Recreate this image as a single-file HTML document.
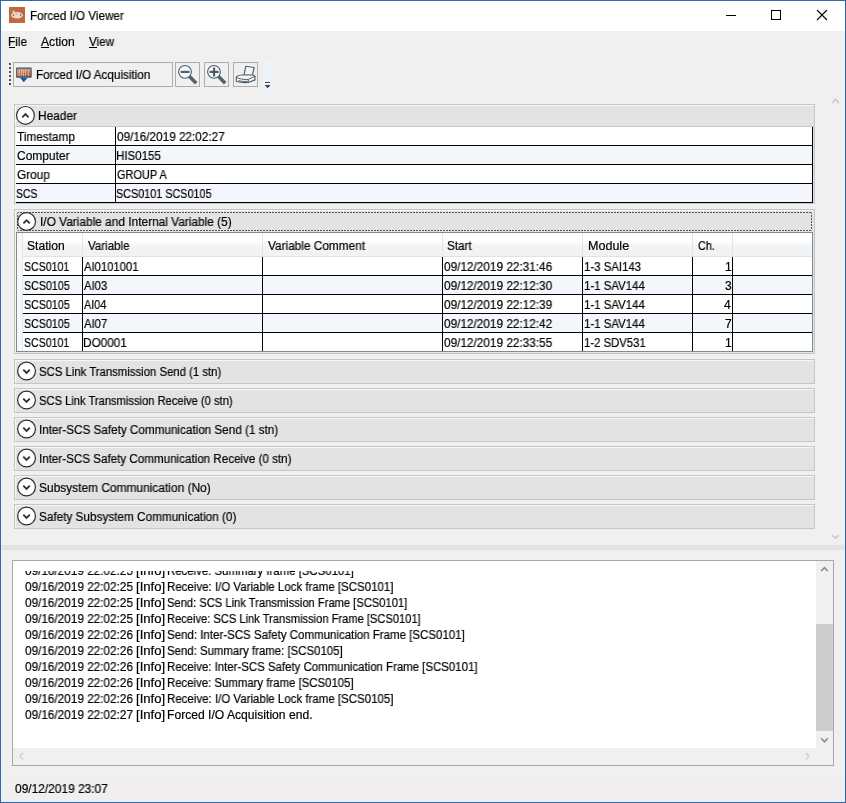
<!DOCTYPE html>
<html><head><meta charset="utf-8">
<style>
html,body{margin:0;padding:0;}
body{width:846px;height:803px;position:relative;overflow:hidden;background:#f0f0f0;font-family:"Liberation Sans",sans-serif;}
.a{position:absolute;box-sizing:border-box;}
.t{position:absolute;font-family:"Liberation Sans",sans-serif;font-size:12px;line-height:20px;white-space:pre;transform-origin:0 0;color:#000;will-change:transform;-webkit-text-stroke:0.2px currentColor;}
.pnl{position:absolute;left:14px;width:801px;border:1px solid #c6c6c6;background:#e3e3e3;box-shadow:inset 1px 1px 0 #f6f6f6;box-sizing:border-box;}
.hl{position:absolute;height:1px;background:#000;}
.vl{position:absolute;width:1px;background:#000;}
</style></head><body>
<!-- title bar -->
<div class="a" style="left:0;top:0;width:846px;height:31px;background:#fff"></div>
<svg class="a" style="left:9px;top:7px" width="16" height="16" viewBox="0 0 16 16">
<rect width="16" height="16" fill="#c0693f"/>
<path d="M1.8 8.3 C2.8 5.8 5.6 5 8.2 5.1 C10.6 5.2 13 6.2 14.2 8.2 C13 10.6 10.4 11.6 8 11.6 C5.4 11.6 2.8 10.6 1.8 8.3 Z" fill="#efd6cc"/>
<path d="M3.6 6.2 L3.8 3 L6.6 5.2 Z" fill="#efd6cc"/>
<circle cx="4.4" cy="8.2" r="0.75" fill="#6d4536"/><circle cx="11.6" cy="8.1" r="0.75" fill="#6d4536"/><circle cx="7.2" cy="6.9" r="0.6" fill="#9a7466"/>
</svg>
<!-- caption buttons -->
<div class="a" style="left:726px;top:15px;width:10px;height:1px;background:#000"></div>
<div class="a" style="left:771px;top:10px;width:10px;height:10px;border:1px solid #000"></div>
<svg class="a" style="left:816px;top:9px" width="12" height="12" viewBox="0 0 12 12"><path d="M1 1 L11 11 M11 1 L1 11" stroke="#000" stroke-width="1.1"/></svg>
<!-- menu underlines -->
<div class="a" style="left:9px;top:47px;width:6px;height:1px;background:#000"></div>
<div class="a" style="left:41px;top:47px;width:8px;height:1px;background:#000"></div>
<div class="a" style="left:89px;top:47px;width:8px;height:1px;background:#000"></div>
<!-- toolbar -->
<div class="a" style="left:9px;top:63px;width:2px;height:22px;background:repeating-linear-gradient(#505050 0 2px,transparent 2px 4px)"></div>
<div class="a" style="left:13px;top:62px;width:160px;height:25px;border:1px solid #adadad;background:#f0f0f0"></div>
<svg class="a" style="left:16px;top:67px" width="16" height="16" viewBox="0 0 16 16">
<defs><linearGradient id="og" x1="0" y1="0" x2="0" y2="1"><stop offset="0" stop-color="#d68d6c"/><stop offset="1" stop-color="#a9573a"/></linearGradient></defs>
<rect x="0.1" y="0.4" width="15.6" height="10.4" fill="#4a525b" rx="0.8"/>
<rect x="1.2" y="1.8" width="13.6" height="0.9" fill="#c9c9c9"/>
<rect x="1.4" y="3" width="13.2" height="6.2" fill="url(#og)"/>
<path d="M1.8 3v6.2M3.4 3v6.2M5.5 3v6.2M7.5 3v6.2M9.4 3v6.2M12.3 3v6.2" stroke="#efc8b4" stroke-width="0.9" opacity="0.8"/>
<path d="M4 10.8 L11.6 10.8 L7.8 15.2 Z" fill="#1b56a8"/>
</svg>
<div class="a" style="left:175px;top:62px;width:25px;height:25px;border:1px solid #adadad"></div>
<div class="a" style="left:204px;top:62px;width:25px;height:25px;border:1px solid #adadad"></div>
<div class="a" style="left:233px;top:62px;width:25px;height:25px;border:1px solid #adadad"></div>
<svg class="a" style="left:175px;top:62px" width="25" height="25" viewBox="0 0 25 25">
<circle cx="10" cy="9.8" r="6.4" fill="#f5f8fa" stroke="#4c5a66" stroke-width="1.05"/>
<path d="M5.6 9.9 H14.6" stroke="#4c5a66" stroke-width="2.1"/>
<path d="M14.3 14.3 L21.2 21.2" stroke="#4e6575" stroke-width="3.6" stroke-linecap="butt"/>
</svg>
<svg class="a" style="left:204px;top:62px" width="25" height="25" viewBox="0 0 25 25">
<circle cx="10" cy="9.8" r="6.4" fill="#f5f8fa" stroke="#4c5a66" stroke-width="1.05"/>
<path d="M5.6 9.9 H14.6 M10.1 5.4 V14.4" stroke="#4c5a66" stroke-width="2.1"/>
<path d="M14.3 14.3 L21.2 21.2" stroke="#4e6575" stroke-width="3.6" stroke-linecap="butt"/>
</svg>
<svg class="a" style="left:233px;top:62px" width="25" height="25" viewBox="0 0 25 25">
<path d="M11.2 12.2 L12.8 4.3 L21.2 5.5 L19.4 12.8" fill="#f4f7fa" stroke="#525f6a" stroke-width="1.15" stroke-linejoin="round"/>
<path d="M3.3 15 C4 13.6 7 13 10.5 12.7 L19.8 13 L22 14.2 L22 17.9 L15.2 20.5 C10 20.8 6 20.4 3.3 19.3 Z" fill="#f4f7fa" stroke="#525f6a" stroke-width="1.15" stroke-linejoin="round"/>
<path d="M3.5 15.2 C6 17.2 11 17.6 15.4 17.4 L22 14.2 M15.4 17.4 L15.2 20.4 M5.5 18.4 C8 19.4 11 19.6 14.6 19.4" fill="none" stroke="#525f6a" stroke-width="1"/>
</svg>
<div class="a" style="left:263px;top:59px;width:10px;height:32px;background:#eef3fa"></div>
<div class="a" style="left:265px;top:82px;width:5px;height:1px;background:#3d4750"></div>
<svg class="a" style="left:264px;top:85px" width="8" height="5" viewBox="0 0 8 5"><path d="M0.6 0 H6.6 L3.6 3.2 Z" fill="#3d4750"/></svg>

<!-- header panel -->
<div class="pnl" style="top:104px;height:100px;"></div>
<div class="a" style="left:15px;top:126px;width:799px;height:1px;background:#c6c6c6"></div>
<div class="a" style="left:16px;top:127px;width:797px;height:76px;background:#fff"></div>
<div class="a" style="left:16px;top:146px;width:796px;height:18px;background:#f3f6fb"></div>
<div class="a" style="left:16px;top:184px;width:796px;height:18px;background:#f3f6fb"></div>
<div class="hl" style="left:16px;top:145px;width:797px"></div>
<div class="hl" style="left:16px;top:164px;width:797px"></div>
<div class="hl" style="left:16px;top:183px;width:797px"></div>
<div class="hl" style="left:16px;top:202px;width:797px"></div>
<div class="vl" style="left:115px;top:127px;height:76px"></div>
<div class="vl" style="left:812px;top:127px;height:76px"></div>

<!-- panel 2 -->
<div class="pnl" style="top:209px;height:145px;"></div>
<div class="a" style="left:17px;top:212px;width:795px;height:19px;border-radius:2px;
 background:
 repeating-linear-gradient(90deg,#555 0 2px,transparent 2px 3px) top/100% 1px no-repeat,
 repeating-linear-gradient(90deg,#555 0 2px,transparent 2px 3px) bottom/100% 1px no-repeat,
 repeating-linear-gradient(180deg,#555 0 2px,transparent 2px 3px) left/1px 100% no-repeat,
 repeating-linear-gradient(180deg,#555 0 2px,transparent 2px 3px) right/1px 100% no-repeat;"></div>
<!-- grid -->
<div class="a" style="left:16px;top:232px;width:797px;height:120px;border:1px solid #7c8b98;background:#fff"></div>
<div class="a" style="left:17px;top:233px;width:795px;height:23px;background:linear-gradient(#fff 0,#fefefe 36%,#f2f3f5 58%,#f1f2f4 100%)"></div>
<div class="a" style="left:17px;top:256px;width:795px;height:1px;background:#e2e2e2"></div>
<div class="a" style="left:17px;top:233px;width:6px;height:118px;background:#f7f7f7"></div>
<div class="a" style="left:22px;top:233px;width:1px;height:118px;background:#e6e6e6"></div>
<div class="a" style="left:82px;top:233px;width:1px;height:23px;background:#e4e4e4"></div>
<div class="a" style="left:262px;top:233px;width:1px;height:23px;background:#e4e4e4"></div>
<div class="a" style="left:442px;top:233px;width:1px;height:23px;background:#e4e4e4"></div>
<div class="a" style="left:582px;top:233px;width:1px;height:23px;background:#e4e4e4"></div>
<div class="a" style="left:692px;top:233px;width:1px;height:23px;background:#e4e4e4"></div>
<div class="a" style="left:732px;top:233px;width:1px;height:23px;background:#e4e4e4"></div>
<div class="a" style="left:23px;top:276px;width:789px;height:18px;background:#f3f6fb"></div>
<div class="a" style="left:23px;top:314px;width:789px;height:18px;background:#f3f6fb"></div>
<div class="hl" style="left:23px;top:275px;width:789px"></div>
<div class="hl" style="left:23px;top:294px;width:789px"></div>
<div class="hl" style="left:23px;top:313px;width:789px"></div>
<div class="hl" style="left:23px;top:332px;width:789px"></div>
<div class="vl" style="left:82px;top:257px;height:94px"></div>
<div class="vl" style="left:262px;top:257px;height:94px"></div>
<div class="vl" style="left:442px;top:257px;height:94px"></div>
<div class="vl" style="left:582px;top:257px;height:94px"></div>
<div class="vl" style="left:692px;top:257px;height:94px"></div>
<div class="vl" style="left:732px;top:257px;height:94px"></div>

<!-- collapsed panels -->
<div class="pnl" style="top:359px;height:25px;"></div>
<div class="pnl" style="top:388px;height:25px;"></div>
<div class="pnl" style="top:417px;height:25px;"></div>
<div class="pnl" style="top:446px;height:25px;"></div>
<div class="pnl" style="top:475px;height:25px;"></div>
<div class="pnl" style="top:504px;height:25px;"></div>

<!-- expander circles -->
<svg class="a" style="left:0;top:0" width="846" height="540">
<g fill="#fff" stroke="#2e2e2e" stroke-width="1.2">
<circle cx="25.45" cy="115.4" r="8.9"/>
<circle cx="26.6" cy="221.5" r="8.9"/>
<circle cx="26.55" cy="371.05" r="8.9"/>
<circle cx="26.55" cy="400.05" r="8.9"/>
<circle cx="26.55" cy="429.05" r="8.9"/>
<circle cx="26.55" cy="458.05" r="8.9"/>
<circle cx="26.55" cy="487.05" r="8.9"/>
<circle cx="26.55" cy="516.05" r="8.9"/>
</g>
<g fill="none" stroke="#2e2e2e" stroke-width="1.8">
<path d="M22.3 117.3 L25.45 114.1 L28.6 117.3"/>
<path d="M23.4 223.4 L26.6 220.2 L29.8 223.4"/>
<path d="M23.3 369.6 L26.55 372.9 L29.8 369.6"/>
<path d="M23.3 398.6 L26.55 401.9 L29.8 398.6"/>
<path d="M23.3 427.6 L26.55 430.9 L29.8 427.6"/>
<path d="M23.3 456.6 L26.55 459.9 L29.8 456.6"/>
<path d="M23.3 485.6 L26.55 488.9 L29.8 485.6"/>
<path d="M23.3 514.6 L26.55 517.9 L29.8 514.6"/>
</g>
<g fill="none" stroke="#c6c6c6" stroke-width="1.5">
<path d="M832.3 102.9 L835.5 99.2 L838.7 102.9"/>
<path d="M832.3 535.2 L835.4 538.2 L838.5 535.2"/>
</g>
</svg>

<!-- splitter -->
<div class="a" style="left:1px;top:545px;width:844px;height:5px;background:#e3e3e3"></div>

<!-- log box -->
<div class="a" style="left:12px;top:560px;width:822px;height:206px;border:1px solid #a8a8a8;background:#fff"></div>
<div class="a" style="left:816px;top:561px;width:17px;height:204px;background:#f0f0f0"></div>
<div class="a" style="left:13px;top:748px;width:803px;height:17px;background:#f0f0f0"></div>
<div class="a" style="left:816px;top:624px;width:17px;height:107px;background:#cdcdcd"></div>
<svg class="a" style="left:0;top:540px" width="846" height="230" viewBox="0 540 846 230">
<g fill="none" stroke="#8a8a8a" stroke-width="1.6">
<path d="M821.2 571 L824.5 567.6 L827.8 571"/>
<path d="M821.2 738.3 L824.5 741.8 L827.8 738.3"/>
</g>
<g fill="none" stroke="#d0d0d0" stroke-width="1.4">
<path d="M23.2 753 L19.8 756.2 L23.2 759.5"/>
<path d="M805.8 753 L809.2 756.2 L805.8 759.5"/>
</g>
</svg>
<div style="position:absolute;left:0;top:0;width:846px;height:803px;clip-path:inset(571px 30px 56px 13px)">
<div class="t" style="left:24.90px;top:561px;transform:scaleX(0.9800);color:#000">09/16/2019 22:02:25</div>
<div class="t" style="left:135.81px;top:561px;transform:scaleX(1.0920);color:#000">[Info]</div>
<div class="t" style="left:167.45px;top:561px;transform:scaleX(0.9492);color:#000">Receive: Summary frame [SCS0101]</div>
<div class="t" style="left:24.90px;top:577px;transform:scaleX(0.9800);color:#000">09/16/2019 22:02:25</div>
<div class="t" style="left:135.81px;top:577px;transform:scaleX(1.0920);color:#000">[Info]</div>
<div class="t" style="left:167.44px;top:577px;transform:scaleX(0.9574);color:#000">Receive: I/O Variable Lock frame [SCS0101]</div>
<div class="t" style="left:24.90px;top:593px;transform:scaleX(0.9800);color:#000">09/16/2019 22:02:25</div>
<div class="t" style="left:135.81px;top:593px;transform:scaleX(1.0920);color:#000">[Info]</div>
<div class="t" style="left:167.47px;top:593px;transform:scaleX(0.9307);color:#000">Send: SCS Link Transmission Frame [SCS0101]</div>
<div class="t" style="left:24.90px;top:609px;transform:scaleX(0.9800);color:#000">09/16/2019 22:02:25</div>
<div class="t" style="left:135.81px;top:609px;transform:scaleX(1.0920);color:#000">[Info]</div>
<div class="t" style="left:167.47px;top:609px;transform:scaleX(0.9276);color:#000">Receive: SCS Link Transmission Frame [SCS0101]</div>
<div class="t" style="left:24.90px;top:625px;transform:scaleX(0.9800);color:#000">09/16/2019 22:02:26</div>
<div class="t" style="left:135.81px;top:625px;transform:scaleX(1.0920);color:#000">[Info]</div>
<div class="t" style="left:167.44px;top:625px;transform:scaleX(0.9583);color:#000">Send: Inter-SCS Safety Communication Frame [SCS0101]</div>
<div class="t" style="left:24.90px;top:641px;transform:scaleX(0.9800);color:#000">09/16/2019 22:02:26</div>
<div class="t" style="left:135.81px;top:641px;transform:scaleX(1.0920);color:#000">[Info]</div>
<div class="t" style="left:167.45px;top:641px;transform:scaleX(0.9508);color:#000">Send: Summary frame: [SCS0105]</div>
<div class="t" style="left:24.90px;top:657px;transform:scaleX(0.9800);color:#000">09/16/2019 22:02:26</div>
<div class="t" style="left:135.81px;top:657px;transform:scaleX(1.0920);color:#000">[Info]</div>
<div class="t" style="left:167.45px;top:657px;transform:scaleX(0.9520);color:#000">Receive: Inter-SCS Safety Communication Frame [SCS0101]</div>
<div class="t" style="left:24.90px;top:673px;transform:scaleX(0.9800);color:#000">09/16/2019 22:02:26</div>
<div class="t" style="left:135.81px;top:673px;transform:scaleX(1.0920);color:#000">[Info]</div>
<div class="t" style="left:167.45px;top:673px;transform:scaleX(0.9482);color:#000">Receive: Summary frame [SCS0105]</div>
<div class="t" style="left:24.90px;top:689px;transform:scaleX(0.9800);color:#000">09/16/2019 22:02:26</div>
<div class="t" style="left:135.81px;top:689px;transform:scaleX(1.0920);color:#000">[Info]</div>
<div class="t" style="left:167.44px;top:689px;transform:scaleX(0.9574);color:#000">Receive: I/O Variable Lock frame [SCS0105]</div>
<div class="t" style="left:24.90px;top:705px;transform:scaleX(0.9800);color:#000">09/16/2019 22:02:27</div>
<div class="t" style="left:135.81px;top:705px;transform:scaleX(1.0920);color:#000">[Info]</div>
<div class="t" style="left:167.39px;top:705px;transform:scaleX(1.0099);color:#000">Forced I/O Acquisition end.</div>
</div>

<!-- status bar -->
<div class="a" style="left:1px;top:775px;width:844px;height:27px;background:#f0eeee"></div>

<div class="t" style="left:29.53px;top:6px;transform:scaleX(0.9719);color:#000">Forced I/O Viewer</div>
<div class="t" style="left:8.22px;top:32px;transform:scaleX(0.9833);color:#000">File</div>
<div class="t" style="left:41.20px;top:32px;transform:scaleX(1.0091);color:#000">Action</div>
<div class="t" style="left:88.80px;top:32px;transform:scaleX(0.9692);color:#000">View</div>
<div class="t" style="left:35.73px;top:65px;transform:scaleX(0.9741);color:#000">Forced I/O Acquisition</div>
<div class="t" style="left:38.41px;top:106px;transform:scaleX(0.9895);color:#000">Header</div>
<div class="t" style="left:17.10px;top:127px;transform:scaleX(0.9831);color:#000">Timestamp</div>
<div class="t" style="left:117.20px;top:127px;transform:scaleX(0.9773);color:#000">09/16/2019 22:02:27</div>
<div class="t" style="left:17.10px;top:146px;transform:scaleX(0.9962);color:#000">Computer</div>
<div class="t" style="left:116.24px;top:146px;transform:scaleX(0.9600);color:#000">HIS0155</div>
<div class="t" style="left:17.10px;top:165px;transform:scaleX(0.9848);color:#000">Group</div>
<div class="t" style="left:117.20px;top:165px;transform:scaleX(0.9127);color:#000">GROUP A</div>
<div class="t" style="left:16.24px;top:184px;transform:scaleX(0.8609);color:#000">SCS</div>
<div class="t" style="left:116.30px;top:184px;transform:scaleX(0.9000);color:#000">SCS0101 SCS0105</div>
<div class="t" style="left:40.01px;top:212px;transform:scaleX(0.9896);color:#000">I/O Variable and Internal Variable (5)</div>
<div class="t" style="left:27.19px;top:236px;transform:scaleX(1.0083);color:#000">Station</div>
<div class="t" style="left:88.30px;top:236px;transform:scaleX(0.9628);color:#000">Variable</div>
<div class="t" style="left:268.00px;top:236px;transform:scaleX(0.9848);color:#000">Variable Comment</div>
<div class="t" style="left:446.82px;top:236px;transform:scaleX(0.9760);color:#000">Start</div>
<div class="t" style="left:587.56px;top:236px;transform:scaleX(1.0447);color:#000">Module</div>
<div class="t" style="left:698.40px;top:236px;transform:scaleX(0.9000);color:#000">Ch.</div>
<div class="t" style="left:23.92px;top:257px;transform:scaleX(0.8800);color:#000">SCS0101</div>
<div class="t" style="left:84.40px;top:257px;transform:scaleX(0.9379);color:#000">AI0101001</div>
<div class="t" style="left:443.90px;top:257px;transform:scaleX(0.9827);color:#000">09/12/2019 22:31:46</div>
<div class="t" style="left:584.05px;top:257px;transform:scaleX(0.9508);color:#000">1-3 SAI143</div>
<div class="t" style="left:724.50px;top:257px;transform:scaleX(1.0000);color:#000">1</div>
<div class="t" style="left:23.91px;top:276px;transform:scaleX(0.8900);color:#000">SCS0105</div>
<div class="t" style="left:84.40px;top:276px;transform:scaleX(0.9417);color:#000">AI03</div>
<div class="t" style="left:443.90px;top:276px;transform:scaleX(0.9827);color:#000">09/12/2019 22:12:30</div>
<div class="t" style="left:584.05px;top:276px;transform:scaleX(0.9524);color:#000">1-1 SAV144</div>
<div class="t" style="left:724.50px;top:276px;transform:scaleX(1.0000);color:#000">3</div>
<div class="t" style="left:23.91px;top:295px;transform:scaleX(0.8900);color:#000">SCS0105</div>
<div class="t" style="left:84.40px;top:295px;transform:scaleX(0.9040);color:#000">AI04</div>
<div class="t" style="left:443.90px;top:295px;transform:scaleX(0.9827);color:#000">09/12/2019 22:12:39</div>
<div class="t" style="left:584.05px;top:295px;transform:scaleX(0.9524);color:#000">1-1 SAV144</div>
<div class="t" style="left:723.50px;top:295px;transform:scaleX(1.0000);color:#000">4</div>
<div class="t" style="left:23.91px;top:314px;transform:scaleX(0.8900);color:#000">SCS0105</div>
<div class="t" style="left:84.40px;top:314px;transform:scaleX(0.9417);color:#000">AI07</div>
<div class="t" style="left:443.90px;top:314px;transform:scaleX(0.9827);color:#000">09/12/2019 22:12:42</div>
<div class="t" style="left:584.05px;top:314px;transform:scaleX(0.9524);color:#000">1-1 SAV144</div>
<div class="t" style="left:724.50px;top:314px;transform:scaleX(1.0000);color:#000">7</div>
<div class="t" style="left:23.92px;top:333px;transform:scaleX(0.8800);color:#000">SCS0101</div>
<div class="t" style="left:83.42px;top:333px;transform:scaleX(0.9814);color:#000">DO0001</div>
<div class="t" style="left:443.90px;top:333px;transform:scaleX(0.9827);color:#000">09/12/2019 22:33:55</div>
<div class="t" style="left:584.06px;top:333px;transform:scaleX(0.9437);color:#000">1-2 SDV531</div>
<div class="t" style="left:724.50px;top:333px;transform:scaleX(1.0000);color:#000">1</div>
<div class="t" style="left:39.35px;top:362px;transform:scaleX(0.9455);color:#000">SCS Link Transmission Send (1 stn)</div>
<div class="t" style="left:39.37px;top:391px;transform:scaleX(0.9304);color:#000">SCS Link Transmission Receive (0 stn)</div>
<div class="t" style="left:39.33px;top:420px;transform:scaleX(0.9742);color:#000">Inter-SCS Safety Communication Send (1 stn)</div>
<div class="t" style="left:39.33px;top:449px;transform:scaleX(0.9683);color:#000">Inter-SCS Safety Communication Receive (0 stn)</div>
<div class="t" style="left:39.31px;top:478px;transform:scaleX(0.9942);color:#000">Subsystem Communication (No)</div>
<div class="t" style="left:39.32px;top:507px;transform:scaleX(0.9800);color:#000">Safety Subsystem Communication (0)</div>
<div class="t" style="left:15.00px;top:779px;transform:scaleX(0.9935);color:#000">09/12/2019 23:07</div>

<!-- window border -->
<div class="a" style="left:0;top:0;width:846px;height:803px;border:1px solid #2d6ba6;pointer-events:none"></div>
</body></html>
